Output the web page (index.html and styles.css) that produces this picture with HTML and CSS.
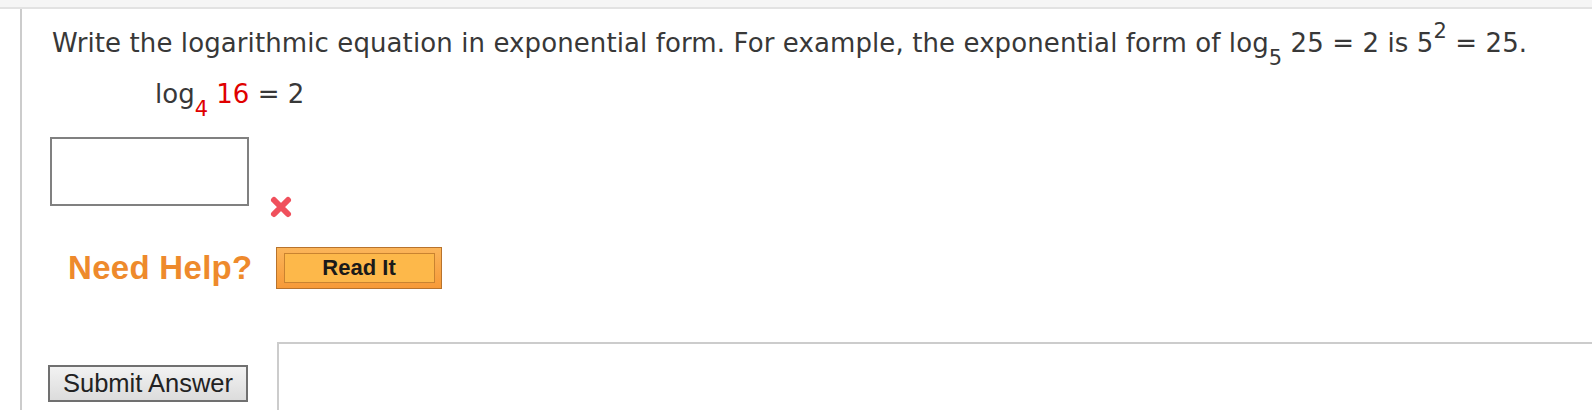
FILE: index.html
```html
<!DOCTYPE html>
<html lang="en">
<head>
  <meta charset="UTF-8">
  <title>Logarithmic Equation</title>
  <link rel="stylesheet" href="styles.css">
</head>
<body>
  <div class="topbar"></div>
  <div class="question">
    <p class="prompt">Write the logarithmic equation in exponential form. For example, the exponential form of log<span class="sub">5</span> 25 = 2 is 5<span class="sup">2</span> = 25.</p>
    <p class="equation">log<span class="sub red">4</span> <span class="red">16</span> = 2</p>

    <div class="answer-row">
      <input type="text" class="answer" />
      <svg class="wrong" width="26" height="26" viewBox="0 0 26 26">
        <path d="M6 6 L20 20 M20 6 L6 20" stroke="#f0505c" stroke-width="6" stroke-linecap="round" fill="none" />
      </svg>
    </div>

    <div class="help-row">
      <span class="need-help">Need Help?</span>
      <div class="read-it"><span>Read It</span></div>
    </div>

    <div class="submit-row">
      <button class="submit">Submit Answer</button>
      <div class="feedback"></div>
    </div>
  </div>
</body>
</html>
```

FILE: styles.css
```css
body { margin: 0; background: white; overflow: hidden; }
.topbar { height: 7px; background: #f5f5f5; border-bottom: 2px solid #e2e2e2; }
.question { margin-left: 20px; border-left: 2px solid #cccccc; padding-left: 26px; height: 401px; overflow: hidden; }
.prompt, .equation { font-family: "DejaVu Sans", Verdana, sans-serif; font-size: 26px; line-height: 30px; color: #383838; margin: 0; }
.prompt { padding-top: 19px; padding-left: 4px; letter-spacing: 0.1px; }
.equation { margin-top: 21px; padding-left: 107px; }
.sub, .sup { font-size: 21px; line-height: 0; }
.sub { vertical-align: -13px; }
.sup { vertical-align: 14px; }
.red { color: #e00000; }
.answer-row { display: flex; align-items: flex-end; margin-top: 28px; padding-left: 2px; }
.answer { width: 199px; height: 69px; box-sizing: border-box; border: 2px solid #808080; margin: 0; padding: 0; }
.wrong { margin-left: 19px; margin-bottom: -14px; }
.help-row { display: flex; align-items: center; margin-top: 41px; padding-left: 20px; }
.need-help { font-family: "Liberation Sans", Arial, sans-serif; font-weight: bold; font-size: 33px; letter-spacing: 0.3px; color: #ee8a2c; }
.read-it { margin-left: 23px; width: 166px; height: 42px; box-sizing: border-box; border: 1px solid #b8732c; background: linear-gradient(#fbb55a, #f79a38); padding: 5px 6px 5px 7px; flex-shrink: 0; }
.read-it span { display: block; height: 30px; box-sizing: border-box; border: 1px solid #c98330; background: #fdb84a; text-align: center; font-family: "Liberation Sans", Arial, sans-serif; font-weight: bold; font-size: 22px; line-height: 28px; color: #1a1a1a; }
.submit-row { display: flex; align-items: flex-start; margin-top: 53px; }
.submit { margin-top: 23px; width: 200px; height: 37px; flex-shrink: 0; border: 2px solid #707070; background: linear-gradient(#f2f2f2, #dcdcdc); font-family: "Liberation Sans", Arial, sans-serif; font-size: 25.5px; color: #222; padding: 0; }
.feedback { margin-left: 29px; width: 1400px; height: 100px; flex-shrink: 0; border: 2px solid #cccccc; }
```
